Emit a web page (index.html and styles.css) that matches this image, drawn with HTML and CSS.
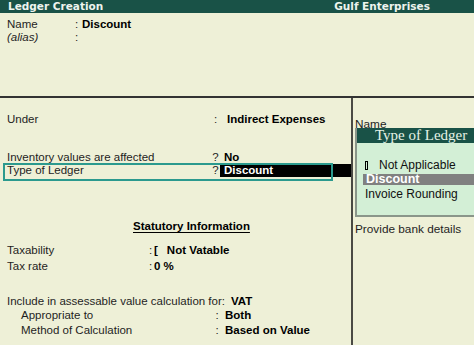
FILE: index.html
```html
<!DOCTYPE html>
<html lang="en">
<head>
  <meta charset="UTF-8">
  <title>Ledger Creation</title>
  <link rel="stylesheet" href="styles.css">
</head>
<body>
<div class="screen">

  <!-- title bar -->
  <div class="title-bar">
    <span>Ledger Creation</span>
    <span>Gulf Enterprises</span>
  </div>

  <!-- name and alias -->
  <div class="name-block">
    <div class="name-row">
      <span class="label">Name</span>
      <span class="sep">:</span>
      <span class="value">Discount</span>
    </div>
    <div class="name-row">
      <span class="label alias">(alias)</span>
      <span class="sep">:</span>
      <span class="value"></span>
    </div>
  </div>

  <div class="main">

    <!-- ledger details -->
    <div class="left-pane">
      <div class="field under">
        <span class="label">Under</span>
        <span class="sep">:</span>
        <span class="value">Indirect Expenses</span>
      </div>
      <div class="field inventory">
        <span class="label">Inventory values are affected</span>
        <span class="sep">?</span>
        <span class="value">No</span>
      </div>
      <div class="field ledger-type">
        <span class="label">Type of Ledger</span>
        <span class="sep">?</span>
        <span class="value active">Discount</span>
      </div>

      <div class="section-title">Statutory Information</div>

      <div class="stat-row first">
        <span class="label">Taxability</span>
        <span class="sep">:</span>
        <span class="value"><span class="bracket">[</span>Not Vatable</span>
      </div>
      <div class="stat-row">
        <span class="label">Tax rate</span>
        <span class="sep">:</span>
        <span class="value">0 %</span>
      </div>

      <div class="include-row">
        <span class="label">Include in assessable value calculation for:</span>
        <span class="value">VAT</span>
      </div>
      <div class="field sub">
        <span class="label">Appropriate to</span>
        <span class="sep">:</span>
        <span class="value">Both</span>
      </div>
      <div class="field sub">
        <span class="label">Method of Calculation</span>
        <span class="sep">:</span>
        <span class="value">Based on Value</span>
      </div>
    </div>

    <!-- side panel -->
    <div class="right-pane">
      <div class="info name-info">Name</div>
      <div class="info bank-info">Provide bank details</div>

      <!-- type of ledger list -->
      <div class="popup">
        <div class="popup-title">Type of Ledger</div>
        <div class="popup-list">
          <div class="popup-item first"><span class="box-glyph"></span>Not Applicable</div>
          <div class="popup-item selected">Discount</div>
          <div class="popup-item">Invoice Rounding</div>
        </div>
      </div>
    </div>

  </div>
</div>
</body>
</html>
```

FILE: styles.css
```css
:root{
  --screen-background: #eef0d7;
  --title-background: #195247;
  --title-font-color: #eef4ee;
  --label-color: #1e1e1e;
  --line-color: #333333;
  --focus-color: #2b9a8e;
  --popup-background: #d3efd6;
  --popup-border: #8a968a;
  --selected-background: #808080;
}

body{
  margin: 0;
  background-color: var(--screen-background);
}

.screen{
  height: 345px;
  width: 474px;
  display: flex;
  flex-direction: column;
  overflow: hidden;
  font-family: 'Liberation Sans', Arial, sans-serif;
  font-size: 11.5px;
  color: var(--label-color);
}

.title-bar{
  height: 13px;
  line-height: 13px;
  display: flex;
  justify-content: space-between;
  padding: 0 44px 0 8px;
  background-color: var(--title-background);
  color: var(--title-font-color);
  font-family: 'DejaVu Sans', Verdana, sans-serif;
  font-weight: 700;
  font-size: 10.5px;
}

/* name block */
.name-block{
  height: 78px;
  padding: 5px 0 0 7px;
  border-bottom: 2px solid var(--line-color);
}

.name-row{
  display: grid;
  grid-template-columns: 68px 7px auto;
  line-height: 13px;
}

.alias{
  font-style: italic;
}

.value{
  font-weight: 700;
  color: #000;
}

.main{
  flex: 1;
  display: flex;
}

/* left side */
.left-pane{
  width: 351px;
  border-right: 2px solid #4a4a44;
  padding-top: 15px;
}

.field{
  display: grid;
  grid-template-columns: 204px 9px 1fr;
  padding-left: 7px;
  line-height: 13px;
}

.field .sep{
  text-align: center;
}

.field .value{
  padding-left: 4px;
}

.under .value{
  padding-left: 7px;
}

.inventory{
  margin-top: 25px;
}

.ledger-type{
  position: relative;
}

.ledger-type::after{
  content: '';
  position: absolute;
  left: 3px;
  top: -1px;
  width: 326px;
  height: 14px;
  border: 2px solid var(--focus-color);
}

.value.active{
  background-color: #000;
  color: #fff;
}

.section-title{
  margin: 43px 0 0 133px;
  line-height: 13px;
  font-weight: 700;
  color: #000;
  text-decoration: underline;
  text-underline-offset: 2px;
}

.stat-row{
  display: grid;
  grid-template-columns: 142px 5px auto;
  padding-left: 7px;
  line-height: 16px;
}

.stat-row.first{
  margin-top: 9px;
}

.bracket{
  margin-right: 9px;
}

.include-row{
  display: flex;
  gap: 6px;
  margin-top: 20px;
  padding-left: 7px;
  line-height: 14px;
}

.field.sub{
  grid-template-columns: 190px 12px 1fr;
  padding-left: 21px;
  line-height: 15px;
}

.field.sub .value{
  padding-left: 2px;
}

/* right side */
.right-pane{
  flex: 1;
  position: relative;
  padding: 20px 0 0 2px;
  font-size: 11.8px;
}

.info{
  line-height: 13px;
}

.bank-info{
  margin-top: 92px;
}

.popup{
  position: absolute;
  left: 2px;
  top: 30px;
  width: 130px;
  height: 87px;
  background-color: var(--popup-background);
  border: 2px solid var(--popup-border);
  border-top: none;
}

.popup-title{
  height: 15px;
  line-height: 15px;
  padding-left: 18px;
  background-color: var(--title-background);
  color: #e6f2e6;
  font-family: 'Liberation Serif', 'Times New Roman', serif;
  font-size: 15px;
}

.popup-list{
  padding-top: 15px;
  font-size: 12px;
  color: #111;
}

.popup-item{
  line-height: 14px;
  padding-left: 8px;
}

.box-glyph{
  display: inline-block;
  width: 1px;
  height: 7px;
  margin-right: 11px;
  border: 1px solid #000;
  vertical-align: -1px;
}

.popup-item.selected{
  margin: 2px 0 2px 6px;
  padding-left: 3px;
  line-height: 11px;
  background-color: var(--selected-background);
  color: #fff;
  font-weight: 700;
  font-size: 12.5px;
}
```
